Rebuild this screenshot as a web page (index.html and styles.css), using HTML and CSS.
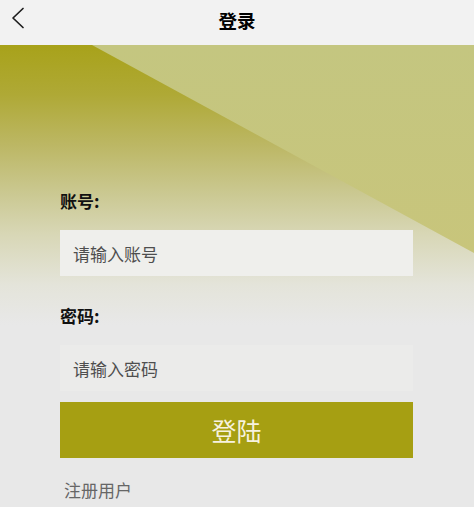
FILE: index.html
```html
<!DOCTYPE html>
<html lang="zh-CN">
<head>
<meta charset="utf-8">
<title>登录</title>
<link rel="stylesheet" href="styles.css">
</head>
<body>
<header class="topbar">
  <span class="back">
    <svg width="16" height="24" viewBox="0 0 16 24"><polyline points="12,1.5 2,11 12,20.5" fill="none" stroke="#1e1e1e" stroke-width="1.7" stroke-linecap="round" stroke-linejoin="round"/></svg>
  </span>
  <h1 class="title">登录</h1>
  <span></span>
</header>
<main class="stage">
  <svg class="backdrop" width="474" height="462" viewBox="0 0 474 462" preserveAspectRatio="none">
    <defs>
      <linearGradient id="fade" x1="0" y1="0" x2="0" y2="1">
        <stop offset="0" stop-color="#a8a21a"/>
        <stop offset="0.108" stop-color="#afa936"/>
        <stop offset="0.216" stop-color="#bcb764"/>
        <stop offset="0.325" stop-color="#cbc993"/>
        <stop offset="0.41" stop-color="#d8d7b6"/>
        <stop offset="0.52" stop-color="#e4e4da"/>
        <stop offset="0.606" stop-color="#e8e8e8"/>
        <stop offset="1" stop-color="#e8e8e8"/>
      </linearGradient>
      <linearGradient id="light" x1="0" y1="0" x2="0" y2="1">
        <stop offset="0" stop-color="#c4c680"/>
        <stop offset="1" stop-color="#c8c57b"/>
      </linearGradient>
    </defs>
    <rect x="0" y="0" width="474" height="462" fill="url(#fade)"/>
    <polygon points="92,0 474,0 474,208" fill="url(#light)"/>
  </svg>
  <form class="form">
    <label class="label">账号:</label>
    <input class="field" type="text" placeholder="请输入账号">
    <label class="label label-pw">密码:</label>
    <input class="field field-pw" type="password" placeholder="请输入密码">
    <button class="submit" type="button">登陆</button>
    <a class="register">注册用户</a>
  </form>
</main>
</body>
</html>
```
FILE: styles.css
```css
html, body {
  margin: 0;
  padding: 0;
}
body {
  width: 474px;
  height: 507px;
  overflow: hidden;
  background: #e8e8e8;
  font-family: "Noto Sans CJK SC", "Noto Sans", sans-serif;
  color: #111;
}
.topbar {
  height: 45px;
  background: #f2f2f2;
  display: grid;
  grid-template-columns: 1fr auto 1fr;
  align-items: start;
}
.back {
  padding: 7px 0 0 11px;
  display: flex;
}
.title {
  margin: 0;
  font-size: 18.5px;
  font-weight: 700;
  line-height: 41px;
  color: #000;
}
.stage {
  display: grid;
  height: 462px;
}
.stage > * {
  grid-area: 1 / 1;
}
.backdrop {
  display: block;
}
.form {
  display: flex;
  flex-direction: column;
  padding-left: 60px;
  width: 353px;
}
.label {
  font-size: 17px;
  font-weight: 700;
  line-height: 22px;
  margin-top: 145px;
  color: #111;
}
.label-pw {
  margin-top: 29px;
}
.field {
  margin-top: 18px;
  height: 46px;
  box-sizing: border-box;
  border: none;
  outline: none;
  padding: 0 0 0 13px;
  background: #efefec;
  font-family: inherit;
  font-size: 17px;
  color: #333;
}
.field-pw {
  background: #ebebea;
}
.field::placeholder {
  color: #4e4e4e;
}
.submit {
  margin-top: 11px;
  height: 56px;
  border: none;
  background: #a69f12;
  color: #f7f2df;
  font-family: inherit;
  font-size: 25px;
  padding: 0;
}
.register {
  margin-top: 21px;
  padding-left: 4px;
  font-size: 17px;
  line-height: 22px;
  color: #666;
}
```
